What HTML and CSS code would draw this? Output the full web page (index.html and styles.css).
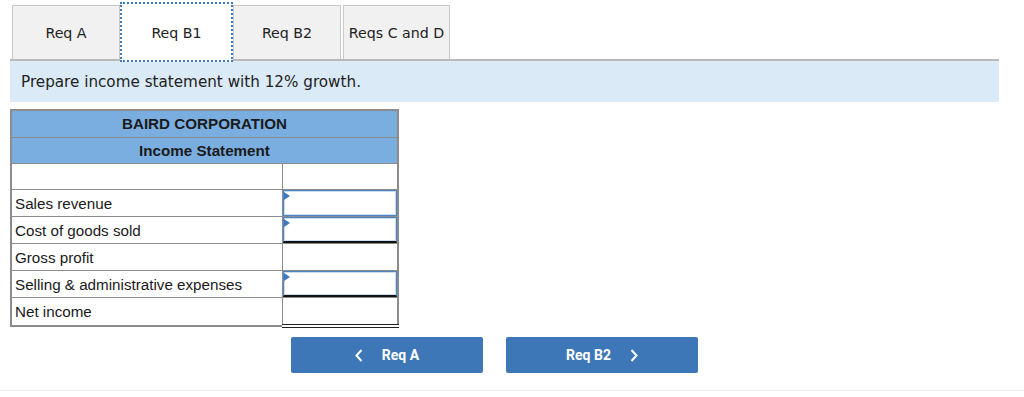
FILE: index.html
```html
<!DOCTYPE html>
<html>
<head>
<meta charset="utf-8">
<link rel="stylesheet" href="styles.css">
</head>
<body>
<div class="page">
  <div class="tabs">
    <div class="tab">Req A</div>
    <div class="tab active">Req B1</div>
    <div class="tab">Req B2</div>
    <div class="tab gap">Reqs C and D</div>
  </div>
  <div class="prompt">Prepare income statement with 12% growth.</div>
  <table class="stmt">
    <tr class="hd first"><th colspan="2">BAIRD CORPORATION</th></tr>
    <tr class="hd second"><th colspan="2">Income Statement</th></tr>
    <tr class="blank"><td class="lbl"></td><td class="val"></td></tr>
    <tr><td class="lbl">Sales revenue</td><td class="val"><div class="inp"><span class="tri"></span></div></td></tr>
    <tr><td class="lbl">Cost of goods sold</td><td class="val"><div class="inp under"><span class="tri"></span></div></td></tr>
    <tr><td class="lbl">Gross profit</td><td class="val"></td></tr>
    <tr><td class="lbl">Selling &amp; administrative expenses</td><td class="val"><div class="inp under"><span class="tri"></span></div></td></tr>
    <tr><td class="lbl">Net income</td><td class="val dbl"></td></tr>
  </table>
  <div class="nav">
    <button class="btn"><svg class="chev" width="8" height="13" viewBox="0 0 8 13"><polyline points="6.5,1 1.5,6.5 6.5,12" fill="none" stroke="#fff" stroke-width="2"/></svg><span>Req A</span></button>
    <button class="btn"><span>Req B2</span><svg class="chev" width="8" height="13" viewBox="0 0 8 13"><polyline points="1.5,1 6.5,6.5 1.5,12" fill="none" stroke="#fff" stroke-width="2"/></svg></button>
  </div>
  <div class="rule"></div>
</div>
</body>
</html>
```
FILE: styles.css
```css
html, body {
  margin: 0;
  padding: 0;
  background: #fff;
}
.page {
  width: 1024px;
  height: 397px;
  overflow: hidden;
}
.tabs {
  display: flex;
  align-items: flex-start;
  padding: 5px 0 0 12px;
  height: 59px;
  box-sizing: border-box;
}
.tab {
  width: 108px;
  height: 54px;
  flex: none;
  box-sizing: border-box;
  border: 1px solid #c9c9c9;
  border-bottom: none;
  background: #f1f1f1;
  font-family: "DejaVu Sans", Verdana, sans-serif;
  font-size: 14.2px;
  color: #222;
  display: flex;
  align-items: center;
  justify-content: center;
}
.tab.active {
  position: relative;
  z-index: 1;
  width: 113px;
  height: 60px;
  margin-top: -3px;
  padding-top: 2px;
  background: #fff;
  border: 2px dotted #3f78bf;
}
.tab.gap {
  margin-left: 2px;
  width: 107px;
}
.prompt {
  margin: 0 25px 0 10px;
  border-top: 2px solid #b9b9b9;
  background: #dbeaf7;
  height: 41px;
  padding: 0 0 0 11px;
  display: flex;
  align-items: center;
  font-family: "DejaVu Sans", Verdana, sans-serif;
  font-size: 15.2px;
  color: #222;
}
.stmt {
  margin: 7px 0 0 10px;
  border-collapse: collapse;
  width: 389px;
  font-family: "Liberation Sans", Arial, sans-serif;
  font-size: 15.2px;
  color: #1a1a1a;
  border: 2px solid #8c8c8c;
}
.stmt th {
  background: #7aaee1;
  border: 1px solid #8c8c8c;
  height: 26px;
  padding: 0;
  font-weight: bold;
  text-align: center;
}
.stmt tr.first th {
  height: 25px;
  padding-bottom: 1px;
}
.stmt tr.second th {
  height: 25px;
}
.stmt td {
  border: 1px solid #8c8c8c;
  height: 26px;
  padding: 0;
}
.stmt tr.blank td {
  height: 25px;
}
.stmt td.lbl {
  width: 269px;
  padding-left: 3px;
}
.stmt td.val {
  width: 116px;
  padding: 0;
  vertical-align: top;
}
.inp {
  position: relative;
  height: 26px;
  box-sizing: border-box;
  border: 1px solid #4f84c4;
  box-shadow: inset 0 0 0 1px #c9dcf1;
  background: #fff;
}
.inp.under {
  border-bottom: 2px solid #111;
}
.tri {
  position: absolute;
  left: 0;
  top: 1px;
  width: 0;
  height: 0;
  border-top: 4px solid transparent;
  border-bottom: 4px solid transparent;
  border-left: 6px solid #3f78c2;
}
.stmt td.dbl {
  border-bottom: 4px double #222;
}
.nav {
  display: flex;
  gap: 23px;
  padding-left: 291px;
  margin-top: 9px;
}
.btn {
  width: 192px;
  height: 36px;
  border: none;
  border-radius: 2px;
  background: #3d77b8;
  color: #fff;
  font-family: Roboto, "Liberation Sans", sans-serif;
  font-weight: bold;
  font-size: 14px;
  display: flex;
  align-items: center;
  justify-content: center;
  gap: 19px;
  padding: 0;
}
.chev {
  display: block;
}
.rule {
  margin-top: 17px;
  border-top: 1px solid #ececec;
}
```
